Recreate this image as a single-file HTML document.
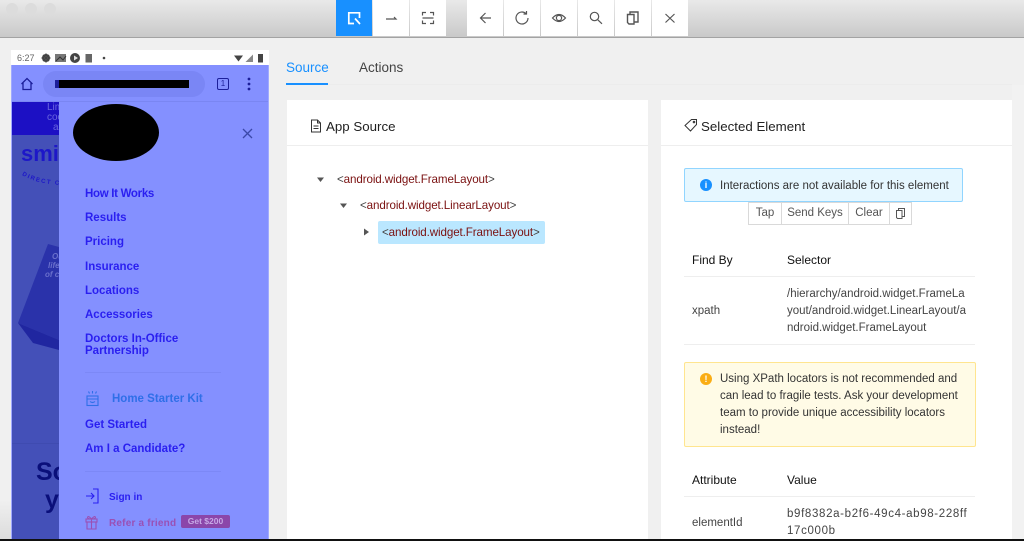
<!DOCTYPE html>
<html><head><meta charset="utf-8"><style>
html,body{margin:0;padding:0;width:1024px;height:541px;overflow:hidden;background:#f0f0f0;font-family:"Liberation Sans",sans-serif}
*{box-sizing:border-box}
.a{position:absolute;white-space:nowrap}
#bar{left:0;top:0;width:1024px;height:38px;background:linear-gradient(#e9e9e9,#c9c9c9);border-bottom:1px solid #a3a3a3}
.dot{top:3px;width:12px;height:12px;border-radius:50%;background:#dcdcdc}
.tb{top:0;width:36px;height:36px;background:#fff}
.tb svg{position:absolute;left:0;top:0;width:36px;height:36px;fill:none;stroke:#555;stroke-width:1.2}
.nav{left:85px;font-size:11.5px;font-weight:bold;color:#2a1ff0;line-height:12px}
.t{font-size:11.5px;color:#444}
.tree{font-size:11.6px;letter-spacing:-.1px;color:#444;line-height:16px}
.tree b{font-weight:normal;color:#7a1010}
.hr{background:#eeeeee;height:1px}
.h{font-size:12px;color:#111}
.btn{top:202px;height:23px;border:1px solid #d9d9d9;background:#fff;font-size:11.5px;color:#555;text-align:center;line-height:21px}
</style></head><body>
<div class="a" id="bar"></div>
<div class="a dot" style="left:6px"></div><div class="a dot" style="left:25px"></div><div class="a dot" style="left:44px"></div>

<div class="a tb" style="left:336px;background:#1890ff"><svg viewBox="0 0 36 36"><path d="M23.500 18V12.800H12.800V23.500H18" stroke="#fff" stroke-width="1.700"/><path d="M19 18.500L24 24" stroke="#fff" stroke-width="1.700"/></svg></div>
<div class="a tb" style="left:373px"><svg viewBox="0 0 36 36"><path d="M13 19H23L21 17"/></svg></div>
<div class="a tb" style="left:410px"><svg viewBox="0 0 36 36"><path d="M12.500 15.500V12.500H16M20 12.500H23.500V15.500M12.500 18H23.500M12.500 20.500V23.500H16M20 23.500H23.500V20.500"/></svg></div>
<div class="a tb" style="left:467px"><svg viewBox="0 0 36 36"><path d="M24 18H13.500M18.500 13L13.500 18L18.500 23"/></svg></div>
<div class="a tb" style="left:504px"><svg viewBox="0 0 36 36"><path d="M22.200 13.700A6 6 0 1 0 24 18M22.500 11V14H19.500"/></svg></div>
<div class="a tb" style="left:541px"><svg viewBox="0 0 36 36"><path d="M11.500 18Q18 11 24.500 18Q18 25 11.500 18Z"/><circle cx="18" cy="18" r="2.600"/></svg></div>
<div class="a tb" style="left:578px"><svg viewBox="0 0 36 36"><circle cx="16.500" cy="16.500" r="4.200"/><path d="M19.800 19.800L24 23.800"/></svg></div>
<div class="a tb" style="left:615px"><svg viewBox="0 0 36 36"><path d="M12.500 14.500H19V24H14L12.500 22.500ZM15 14.500V12H23V22H19" stroke-width="1.400"/></svg></div>
<div class="a tb" style="left:652px"><svg viewBox="0 0 36 36"><path d="M13.500 14L22.500 22.500M22.500 14L13.500 22.500"/></svg></div>

<div class="a" style="left:0;top:500px;width:11px;height:39px;background:linear-gradient(#f0f0f0,#dcdcdc)"></div>

<!-- Phone -->
<div class="a" style="left:11px;top:50px;width:258px;height:491px;background:#fff;overflow:hidden">
  <div class="a" style="left:6px;top:3px;font-size:9px;color:#666">6:27</div>
  <svg class="a" style="left:0;top:0" width="258" height="15"><circle cx="35" cy="8" r="3" fill="none" stroke="#444" stroke-width="2"/><path d="M35 3.500V12.500M30.500 8H39.500M32 5L38 11M38 5L32 11" stroke="#444" stroke-width="1.300"/><rect x="44" y="4" width="11" height="8" fill="#777"/><path d="M45 11L49 7L52 10L55 6" stroke="#333" fill="none"/><circle cx="64" cy="8" r="5" fill="#444"/><path d="M63 5.500V10.500L67 8Z" fill="#ddd"/><path d="M74.500 4H81V12.500H74.500Z" fill="#666"/><circle cx="93" cy="8" r="1.300" fill="#444"/><path d="M223 5.500H232L227.500 11.500Z" fill="#444"/><path d="M242 4.500V12H234.500Z" fill="#888"/><rect x="247" y="4" width="5" height="8.500" fill="#444"/></svg>
</div>
<div class="a" style="left:11px;top:65px;width:258px;height:475px;background:#8490ff;border:1px solid #a0aaff;border-top:0;overflow:hidden">
  <div class="a" style="left:0;top:37px;width:47px;height:33px;background:#1c10c4;color:#6a66dd;font-size:10px;line-height:11px;overflow:hidden"><span class="a" style="left:35px;top:0">Lim</span><span class="a" style="left:35px;top:10px">coo</span><span class="a" style="left:41px;top:20px">al</span></div>
  <div class="a" style="left:0;top:70px;width:47px;height:405px;background:#4450b8"></div>
  <div class="a" style="left:0;top:378px;width:47px;height:1px;background:#3f4bb0"></div>
  <div class="a" style="left:9px;top:77px;width:38px;overflow:hidden;font-size:22px;font-weight:bold;color:#1d17c8;line-height:24px">smile</div>
  <svg class="a" style="left:0;top:100px" width="47" height="30"><defs><path id="arc" d="M10 10 Q 25 19 50 20"/></defs><text font-family="Liberation Sans" font-size="6" font-weight="bold" fill="#1d17c8" letter-spacing="1.500"><textPath href="#arc">DIRECT C</textPath></text></svg>
  <svg class="a" style="left:0;top:177px" width="47" height="120"><path d="M36 2L47 5V98L6 81Z" fill="#2a32aa"/><path d="M6 81L47 98V108L21 101Z" fill="#2026a0"/><g font-family="Liberation Sans" font-size="8" font-weight="bold" font-style="italic" fill="#6a70cc"><text x="40" y="17">Ou</text><text x="36" y="26">life</text><text x="33" y="35">of c</text></g></svg>
  <div class="a" style="left:24px;top:393px;width:23px;overflow:hidden;font-size:25px;font-weight:bold;color:#0a0f7a;line-height:28px">So</div>
  <div class="a" style="left:33px;top:421px;width:14px;overflow:hidden;font-size:25px;font-weight:bold;color:#0a0f7a;line-height:28px">y</div>
  <div class="a" style="left:47px;top:37px;width:211px;height:438px;background:#8490ff"></div>
  <div class="a" style="left:0;top:0;width:256px;height:37px;background:#8490ff;border-bottom:1px solid #7a86f2"></div>
  <div class="a" style="left:31px;top:6px;width:162px;height:26px;border-radius:13px;background:#7a86f5"></div>
</div>
<svg class="a" style="left:18px;top:74px" width="20" height="20" fill="none" stroke="#1c1f9a" stroke-width="1.300"><path d="M3.500 10L9 4.500L14.500 10M5 9V15.500H13V9"/></svg>
<div class="a" style="left:59px;top:80px;width:130px;height:8px;background:#000"></div>
<div class="a" style="left:55px;top:80px;width:4px;height:8px;background:#1c1f9a"></div>
<div class="a" style="left:217px;top:78px;width:12px;height:12px;border:1px solid #1c1f9a;border-radius:2px;font-size:8px;line-height:10px;text-align:center;color:#1c1f9a">1</div>
<svg class="a" style="left:246px;top:77px" width="6" height="14" fill="#1c1f9a"><circle cx="3" cy="2" r="1.400"/><circle cx="3" cy="7" r="1.400"/><circle cx="3" cy="12" r="1.400"/></svg>
<div class="a" style="left:73px;top:104px;width:86px;height:57px;border-radius:50%;background:#000"></div>
<svg class="a" style="left:241px;top:127px" width="13" height="13" stroke="#3a48a8" stroke-width="1.300"><path d="M2 2L11 11M11 2L2 11"/></svg>

<div class="a nav" style="top:188px;letter-spacing:-.3px">How It Works</div>
<div class="a nav" style="top:212px">Results</div>
<div class="a nav" style="top:236px">Pricing</div>
<div class="a nav" style="top:261px">Insurance</div>
<div class="a nav" style="top:285px">Locations</div>
<div class="a nav" style="top:309px">Accessories</div>
<div class="a nav" style="top:333px">Doctors In-Office</div>
<div class="a nav" style="top:345px">Partnership</div>
<div class="a" style="left:85px;top:372px;width:136px;height:1px;background:#7c88f6"></div>
<svg class="a" style="left:86px;top:390px" width="14" height="17" fill="none" stroke="#2f6fe8" stroke-width="1.100"><rect x="1" y="6" width="11" height="9.500"/><path d="M1 9H12M4 11.500Q6.500 13.500 9 11.500M2.500 1.500L3.500 3.500M6.500 1V3.500M10.500 1.500L9.500 3.500"/></svg>
<div class="a nav" style="left:112px;top:393px;color:#2f6fe8">Home Starter Kit</div>
<div class="a nav" style="top:419px">Get Started</div>
<div class="a nav" style="top:443px">Am I a Candidate?</div>
<div class="a" style="left:85px;top:471px;width:136px;height:1px;background:#7c88f6"></div>
<svg class="a" style="left:85px;top:488px" width="14" height="16" fill="none" stroke="#2a1ff0" stroke-width="1.100"><path d="M8 1H13V15H8M1 8H9M6 5L9 8L6 11"/></svg>
<div class="a nav" style="left:109px;top:492px;font-size:10px">Sign in</div>
<svg class="a" style="left:85px;top:515px" width="14" height="15" fill="none" stroke="#9a50b4" stroke-width="1.100"><rect x="1" y="4" width="11" height="3"/><path d="M2 7V14H11V7M6.500 4V14M6.500 4Q3 0 2.500 2.500Q3 4 6.500 4Q10 0 10.500 2.500Q10 4 6.500 4"/></svg>
<div class="a nav" style="left:109px;top:518px;font-size:10px;color:#9a50b4;letter-spacing:.2px">Refer a friend</div>
<div class="a" style="left:181px;top:515px;width:49px;height:13px;border-radius:2px;background:#8b46aa;color:#c6a8e6;font-size:8.500px;font-weight:bold;line-height:13px;text-align:center">Get $200</div>

<!-- Tabs -->
<div class="a" style="left:286px;top:60px;font-size:13.500px;color:#1890ff">Source</div>
<div class="a" style="left:359px;top:60px;font-size:13.500px;color:#444">Actions</div>
<div class="a" style="left:286px;top:83px;width:42px;height:2px;background:#1890ff"></div>
<div class="a" style="left:328px;top:84px;width:684px;height:1px;background:#ececec"></div>

<!-- Left panel -->
<div class="a" style="left:287px;top:100px;width:361px;height:441px;background:#fff"></div>
<div class="a hr" style="left:287px;top:145px;width:361px"></div>
<svg class="a" style="left:310px;top:119px" width="12" height="14" fill="none" stroke="#333" stroke-width="1"><path d="M1.500 1H7.500L10.500 4V13H1.500ZM7.500 1V4H10.500M3.500 7H8.500M3.500 9.500H8.500"/></svg>
<div class="a" style="left:326px;top:119px;font-size:13.300px;color:#222">App Source</div>
<svg class="a" style="left:0;top:0" width="400" height="240" fill="#555"><path d="M317 177.500H324L320.500 182Z"/><path d="M340 203.500H347L343.500 208Z"/><path d="M364 228.500V235.500L369 232Z"/></svg>
<div class="a" style="left:378px;top:221px;width:167px;height:23px;background:#bae7ff;border-radius:2px"></div>
<div class="a tree" style="left:337px;top:172px">&lt;<b>android.widget.FrameLayout</b>&gt;</div>
<div class="a tree" style="left:360px;top:198px">&lt;<b>android.widget.LinearLayout</b>&gt;</div>
<div class="a tree" style="left:382px;top:225px">&lt;<b>android.widget.FrameLayout</b>&gt;</div>

<!-- Right panel -->
<div class="a" style="left:661px;top:100px;width:351px;height:441px;background:#fff"></div>
<div class="a hr" style="left:661px;top:145px;width:351px"></div>
<svg class="a" style="left:684px;top:118px" width="14" height="15" fill="none" stroke="#333" stroke-width="1"><path d="M1 7.500L7.500 1.500H12.500V6.500L6.500 13Z"/><circle cx="10" cy="4" r=".8"/></svg>
<div class="a" style="left:701px;top:119px;font-size:13.300px;color:#222">Selected Element</div>

<div class="a" style="left:684px;top:168px;width:279px;height:34px;background:#e6f7ff;border:1px solid #91d5ff;border-radius:2px"></div>
<div class="a" style="left:700px;top:179px;width:12px;height:12px;border-radius:50%;background:#1890ff;color:#fff;font-size:9px;font-weight:bold;line-height:12px;text-align:center">i</div>
<div class="a t" style="left:720px;top:180px;color:#333">Interactions are not available for this element</div>
<div class="a btn" style="left:748px;width:34px">Tap</div>
<div class="a btn" style="left:781px;width:68px">Send Keys</div>
<div class="a btn" style="left:848px;width:42px">Clear</div>
<div class="a btn" style="left:889px;width:23px"></div>
<svg class="a" style="left:895px;top:207px" width="12" height="13" fill="none" stroke="#555"><path d="M1.500 3.500H7V11.500H2.500L1.500 10.500ZM3.500 3.500V1.500H9.500V9.500H7"/></svg>

<div class="a h" style="left:692px;top:253px">Find By</div>
<div class="a h" style="left:787px;top:253px">Selector</div>
<div class="a hr" style="left:684px;top:276px;width:291px"></div>
<div class="a t" style="left:692px;top:305px">xpath</div>
<div class="a t" style="left:787px;top:288px">/hierarchy/android.widget.FrameLa</div>
<div class="a t" style="left:787px;top:305px">yout/android.widget.LinearLayout/a</div>
<div class="a t" style="left:787px;top:322px">ndroid.widget.FrameLayout</div>
<div class="a hr" style="left:684px;top:344px;width:291px"></div>

<div class="a" style="left:684px;top:362px;width:292px;height:85px;background:#fffbe6;border:1px solid #ffe58f;border-radius:2px"></div>
<div class="a" style="left:700px;top:373px;width:12px;height:12px;border-radius:50%;background:#faad14;color:#fff;font-size:9px;font-weight:bold;line-height:12px;text-align:center">!</div>
<div class="a t" style="left:720px;top:373px;color:#333">Using XPath locators is not recommended and</div>
<div class="a t" style="left:720px;top:390px;color:#333">can lead to fragile tests. Ask your development</div>
<div class="a t" style="left:720px;top:407px;color:#333">team to provide unique accessibility locators</div>
<div class="a t" style="left:720px;top:424px;color:#333">instead!</div>

<div class="a h" style="left:692px;top:473px">Attribute</div>
<div class="a h" style="left:787px;top:473px">Value</div>
<div class="a hr" style="left:684px;top:496px;width:291px"></div>
<div class="a t" style="left:692px;top:517px">elementId</div>
<div class="a t" style="left:787px;top:508px;letter-spacing:.65px">b9f8382a-b2f6-49c4-ab98-228ff</div>
<div class="a t" style="left:787px;top:525px;letter-spacing:.65px">17c000b</div>

<div class="a" style="left:1012px;top:85px;width:12px;height:454px;background:#f2f2f2"></div>
<div class="a" style="left:0;top:539px;width:1024px;height:2px;background:#111"></div>
</body></html>
